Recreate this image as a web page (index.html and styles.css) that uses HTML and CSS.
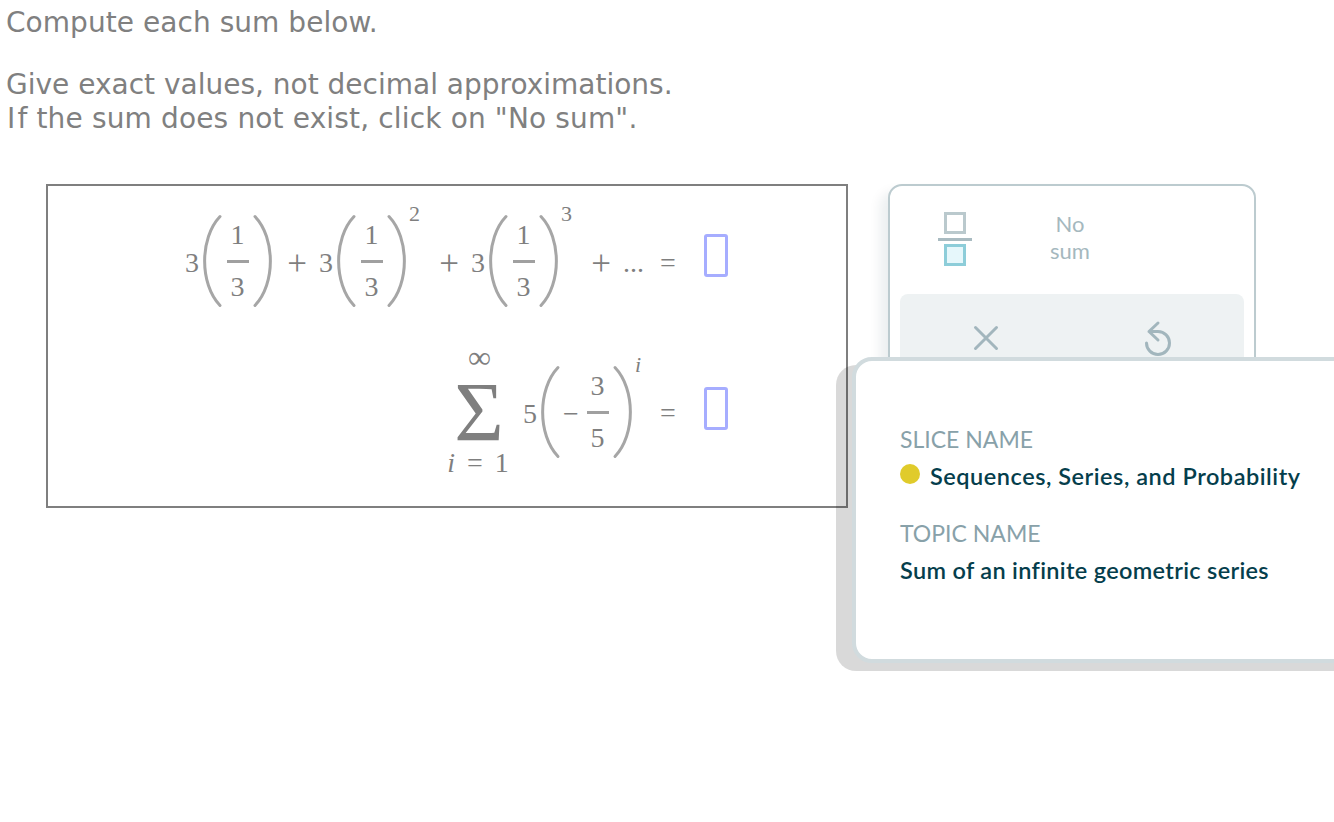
FILE: index.html
```
<!DOCTYPE html>
<html lang="en">
<head>
    <meta charset="UTF-8">
    <title>Sum of an infinite geometric series</title>
    <link rel="stylesheet" href="styles.css">
</head>
<body>
    <svg class="defs" width="0" height="0">
        <symbol id="paren" viewBox="0 0 22 94">
            <path d="M19 2.500C-1.500 24 -1.500 70 19 91.500"/>
        </symbol>
    </svg>

    <div class="question">
        <p><span class="q1">Compute each sum below.</span></p>
        <p><span class="q2">Give exact values, not decimal approximations.</span><br><span class="q3"><span class="cap">I</span>f the sum does not exist, click on "No sum".</span></p>
    </div>

    <div class="work">
        <div class="equations">
            <div class="row first">
                <span class="num">3</span>
                <svg class="paren"><use href="#paren"/></svg>
                <span class="frac"><span>1</span><i class="bar"></i><span>3</span></span>
                <svg class="paren right"><use href="#paren"/></svg>
                <span class="op">+</span>
                <span class="num">3</span>
                <svg class="paren"><use href="#paren"/></svg>
                <span class="frac"><span>1</span><i class="bar"></i><span>3</span></span>
                <svg class="paren right"><use href="#paren"/></svg>
                <span class="sup">2</span>
                <span class="op">+</span>
                <span class="num">3</span>
                <svg class="paren"><use href="#paren"/></svg>
                <span class="frac"><span>1</span><i class="bar"></i><span>3</span></span>
                <svg class="paren right"><use href="#paren"/></svg>
                <span class="sup">3</span>
                <span class="op">+</span>
                <span class="dots">...</span>
                <span class="eq">=</span>
                <span class="answer"></span>
            </div>
            <div class="row second">
                <span class="sum">
                    <span class="upper">∞</span>
                    <span class="sigma">Σ</span>
                    <span class="lower"><em>i</em><span>=</span><span>1</span></span>
                </span>
                <span class="num">5</span>
                <svg class="paren"><use href="#paren"/></svg>
                <span class="minus">−</span>
                <span class="frac"><span>3</span><i class="bar"></i><span>5</span></span>
                <svg class="paren right"><use href="#paren"/></svg>
                <span class="sup"><em>i</em></span>
                <span class="eq">=</span>
                <span class="answer"></span>
            </div>
        </div>

        <div class="keypad">
            <div class="keys">
                <span class="frac-key"><i class="top"></i><i class="line"></i><i class="bottom"></i></span>
                <span class="no-sum">No<br>sum</span>
            </div>
            <div class="actions">
                <svg width="30" height="30" viewBox="0 0 30 30"><path d="M4.500 4.500l21 21M25.500 4.500l-21 21"/></svg>
                <svg width="34" height="38" viewBox="0 0 34 38"><path d="M17 4L8 12.500L17 21M8 12.500H17A11.500 11.500 0 1 1 5.500 24"/></svg>
            </div>
        </div>
    </div>

    <div class="popup">
        <div class="label">SLICE NAME</div>
        <div class="value slice"><i class="dot"></i><span>Sequences, Series, and Probability</span></div>
        <div class="label">TOPIC NAME</div>
        <div class="value topic"><span>Sum of an infinite geometric series</span></div>
    </div>
</body>
</html>
```
FILE: styles.css
```
body {
    margin: 0;
    height: 822px;
    overflow: hidden;
    background: #fff;
}
.defs {
    display: block;
}
.question {
    padding: 6px 0 0 6px;
    font: 28px/34px "DejaVu Sans", sans-serif;
    color: #808080;
    white-space: nowrap;
}
.question p {
    margin: 0 0 28px;
}
.q1 {
    letter-spacing: 0.05px;
}
.q3 {
    letter-spacing: 0.15px;
}
.cap {
    padding: 0 2px 0 1px;
}
.work {
    display: flex;
    align-items: flex-start;
    gap: 40px;
    margin: 48px 0 0 46px;
}
.equations {
    box-sizing: border-box;
    width: 802px;
    height: 324px;
    border: 2px solid #7f7f7f;
    color: #7f7f7f;
    font: 28px/28px "Liberation Serif", serif;
}
.row {
    display: flex;
    align-items: center;
}
.row > * {
    flex: none;
}
.first {
    height: 94px;
    padding: 28px 0 0 137px;
}
.second {
    height: 128px;
    padding: 40px 0 0 399px;
}
.num {
    width: 16px;
    padding-top: 3px;
}
.paren {
    width: 22px;
    height: 94px;
    fill: none;
    stroke: #a6a6a6;
    stroke-width: 3;
    stroke-linecap: round;
}
.right {
    transform: scaleX(-1);
}
.frac {
    display: flex;
    flex-direction: column;
    align-items: center;
    width: 29px;
}
.bar {
    width: 22px;
    height: 3px;
    margin: 11px 0 10px;
    background: #a0a0a0;
}
.op {
    width: 46px;
    margin-right: -1px;
    padding-top: 5px;
    text-align: center;
    font-size: 35px;
}
.sup {
    width: 17px;
    padding: 0 0 94px 1px;
    font-size: 22px;
}
.dots {
    padding-top: 3px;
}
.eq {
    width: 48px;
    padding-top: 3px;
    text-align: center;
}
.answer {
    box-sizing: border-box;
    width: 24px;
    height: 43px;
    margin: 0 0 12px 12px;
    border: 3px solid #a6adff;
    border-radius: 3px;
}
.sum {
    display: flex;
    flex-direction: column;
    align-items: center;
    width: 62px;
    margin-right: 14px;
}
.upper {
    height: 36px;
    margin: -7px 0 0 3px;
    font-size: 32px;
}
.sigma {
    height: 70px;
    margin-left: 2px;
    font-size: 85px;
    line-height: 66px;
}
.lower {
    display: flex;
    gap: 12px;
    height: 26px;
}
.minus {
    width: 20px;
    padding: 3px 0 0 2px;
}
.second .sup {
    width: 9px;
}
.second .answer {
    margin-bottom: 8px;
}
.second .eq {
    padding-top: 1px;
}
.keypad {
    box-sizing: border-box;
    width: 368px;
    height: 260px;
    padding: 0 10px;
    border: 2px solid #bccbcf;
    border-radius: 14px;
    background: #fff;
    box-shadow: -8px 8px 12px rgba(0, 50, 60, 0.08);
}
.keys {
    display: flex;
    gap: 66px;
    height: 108px;
    padding-left: 38px;
}
.frac-key {
    display: flex;
    flex-direction: column;
    align-items: center;
    width: 34px;
    padding-top: 26px;
}
.top, .bottom {
    box-sizing: border-box;
    width: 22px;
    height: 22px;
    border: 3px solid #bac9cd;
}
.line {
    width: 34px;
    height: 3px;
    margin: 4px 0 3px;
    background: #a9bbc1;
}
.bottom {
    border-color: #8dcdd9;
    background: #e6f7fb;
}
.no-sum {
    width: 64px;
    padding-top: 24px;
    text-align: center;
    font: 22px/27px Lato, sans-serif;
    color: #a5b8be;
}
.actions {
    display: flex;
    height: 130px;
    border-radius: 8px;
    background: #eef2f3;
}
.actions svg {
    margin: 29px 71px 0;
    fill: none;
    stroke: #a2b6bd;
    stroke-width: 3;
    stroke-linecap: round;
    stroke-linejoin: round;
}
.actions svg + svg {
    margin: 25px 0 0 69px;
}
.popup {
    position: absolute;
    top: 357px;
    left: 852px;
    box-sizing: border-box;
    width: 520px;
    height: 306px;
    padding: 63px 0 0 44px;
    border: 4px solid #d1dbde;
    border-radius: 20px;
    background: #fff;
    box-shadow: -16px 8px 0 rgba(0, 0, 0, 0.15);
    font: 23px/30px Lato, sans-serif;
    white-space: nowrap;
}
.label {
    color: #88a1a9;
}
.value {
    display: flex;
    gap: 10px;
    margin: 7px 0 27px;
    font-size: 23.5px;
    font-weight: 600;
    color: #053e4c;
}
.slice {
    letter-spacing: 0.53px;
}
.topic {
    letter-spacing: 0.32px;
}
.dot {
    width: 20px;
    height: 20px;
    margin-top: 3px;
    border-radius: 50%;
    background: #e0cb2b;
}
```
